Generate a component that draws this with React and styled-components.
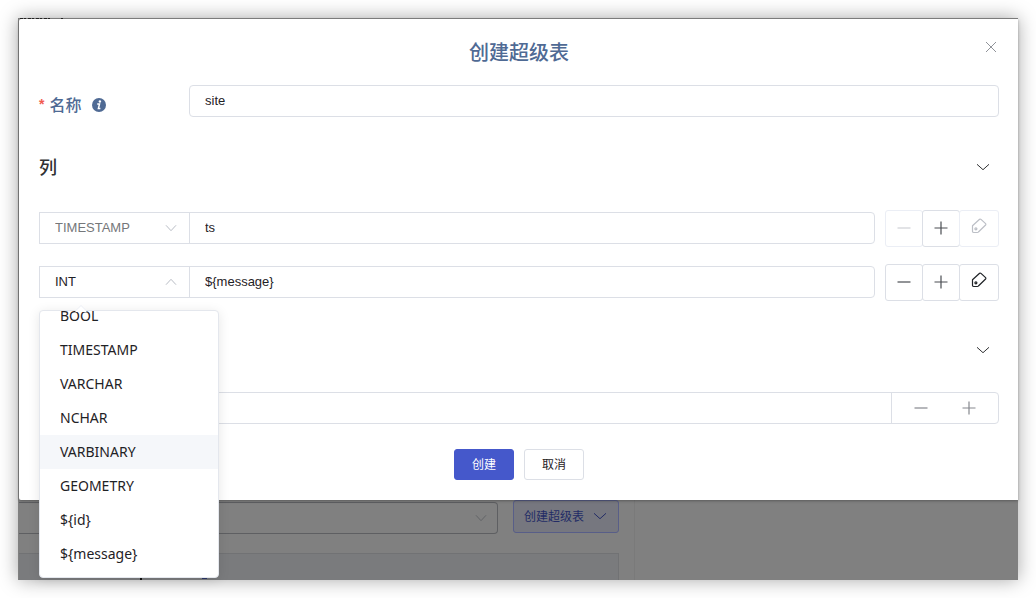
import React, { useState } from 'react';
import styled, { createGlobalStyle } from 'styled-components';

const GlobalStyle = createGlobalStyle`
  *, *::before, *::after {
    box-sizing: border-box;
  }
  body {
    margin: 0;
    background: #fff;
    font-family: 'Liberation Sans', 'Noto Sans CJK SC', sans-serif;
    color: #1f2226;
  }
  button, input, select {
    font-family: inherit;
    margin: 0;
  }
`;

const Stage = styled.div`
  padding: 18px;
`;

const Frame = styled.div`
  position: relative;
  padding: 1px 0 0 1px;
  background: #808080;
  box-shadow: 0 0 18px rgba(0, 0, 0, 0.35);
`;

const Scraps = styled.svg`
  position: absolute;
  left: ${props => props.$left}px;
  ${props => (props.$bottom ? 'bottom: 0;' : 'top: 0;')}
`;

const Dialog = styled.form`
  position: relative;
  padding: 20px 19px 20px 20px;
  background: #fff;
  border-radius: 2px 0 0 2px;
  box-shadow: 0 1px 3px rgba(0, 0, 0, 0.3);
`;

const Title = styled.h1`
  margin: 0 0 18px;
  font-size: 20px;
  line-height: 28px;
  font-weight: 500;
  text-align: center;
  color: #4f6a94;
`;

const Close = styled.button`
  position: absolute;
  top: 20px;
  right: 19px;
  width: 16px;
  height: 16px;
  padding: 0;
  border: 0;
  background: none;
  color: #909399;
  cursor: pointer;
`;

const Field = styled.div`
  display: flex;
  align-items: flex-start;
`;

const Label = styled.label`
  display: flex;
  align-items: center;
  width: 150px;
  height: 38px;
  font-size: 16px;
  font-weight: 500;
  color: #4f6a94;
  svg {
    margin: 2px 0 0 11px;
  }
`;

const Star = styled.span`
  margin-right: 5px;
  font-size: 14px;
  font-weight: 700;
  color: #f15b50;
`;

const TextInput = styled.input`
  flex: 1;
  min-width: 0;
  height: 32px;
  padding: 0 15px 2px;
  border: 1px solid #dcdfe6;
  border-radius: ${props => (props.$joined ? '0 4px 4px 0' : '4px')};
  background: #fff;
  font-size: 13px;
  color: #1f2226;
  outline: none;
`;

const SectionHead = styled.div`
  display: flex;
  align-items: center;
  justify-content: space-between;
  height: 48px;
  margin-top: ${props => props.$gap}px;
  padding-right: 9px;
`;

const SectionTitle = styled.h2`
  margin: 0;
  padding-bottom: 2px;
  font-size: 18px;
  font-weight: 500;
  color: #303133;
`;

const Toggle = styled.button`
  display: flex;
  margin-left: auto;
  padding: 0;
  border: 0;
  background: none;
  color: #303133;
  cursor: pointer;
`;

const Rows = styled.div`
  display: flex;
  flex-direction: column;
  gap: 17px;
  margin-top: 19px;
`;

const Row = styled.div`
  display: flex;
  align-items: flex-start;
  gap: 10px;
`;

const Group = styled.div`
  display: flex;
  flex: 1;
  margin-top: 2px;
`;

const SelectWrap = styled.div`
  position: relative;
  width: 151px;
  margin-right: -1px;
  color: #b9bdc5;
`;

const TypeSelect = styled.select`
  appearance: none;
  display: block;
  width: 100%;
  height: 32px;
  padding: 0 30px 2px 15px;
  border: 1px solid #dcdfe6;
  border-radius: 0;
  background: #fff;
  font-size: 13px;
  color: #1f2226;
  opacity: 1;
  &:disabled {
    color: #75777a;
  }
`;

const Caret = styled.span`
  position: absolute;
  top: 10px;
  right: 13px;
  display: flex;
  pointer-events: none;
`;

const Actions = styled.div`
  display: grid;
  grid-template-columns: 37px 37px 40px;
`;

const IconButton = styled.button`
  display: flex;
  align-items: center;
  justify-content: center;
  height: 37px;
  margin-right: ${props => (props.$last ? 0 : -1)}px;
  padding: 0 0 2px;
  border: 1px solid #dcdfe6;
  border-radius: 3px;
  background: #fff;
  color: #4a4d52;
  cursor: pointer;
  &:disabled {
    border-color: #ebeef5;
    color: #cfd1d6;
  }
`;

const TagButton = styled(IconButton)`
  padding-bottom: 5px;
  color: #1f2226;
  &:disabled {
    color: #bcbfc6;
  }
`;

const TagGroup = styled.div`
  display: flex;
  height: 32px;
  margin-top: 18px;
  border: 1px solid #dcdfe6;
  border-radius: 4px;
`;

const TagInput = styled.input`
  flex: 1;
  min-width: 0;
  padding: 0 15px;
  border: 0;
  border-right: 1px solid #dcdfe6;
  border-radius: 4px 0 0 4px;
  font-size: 13px;
  outline: none;
`;

const Append = styled.div`
  display: flex;
  justify-content: center;
  width: 106px;
`;

const PlainButton = styled.button`
  display: flex;
  align-items: center;
  justify-content: center;
  width: 48px;
  padding: 0;
  border: 0;
  background: none;
  color: #85888e;
  cursor: pointer;
`;

const Footer = styled.div`
  display: flex;
  justify-content: center;
  gap: 10px;
  margin-top: 25px;
`;

const Button = styled.button`
  width: 60px;
  height: 31px;
  padding: 0 0 2px;
  border: 1px solid ${props => (props.$primary ? '#4558cb' : '#dcdfe6')};
  border-radius: 3px;
  background: ${props => (props.$primary ? '#4558cb' : '#fff')};
  color: ${props => (props.$primary ? '#fff' : '#1f2226')};
  font-size: 12px;
  cursor: pointer;
`;

const Menu = styled.div`
  position: absolute;
  z-index: 10;
  top: 44px;
  left: 0;
  width: 180px;
  border: 1px solid #e4e7ed;
  border-radius: 4px;
  background: #fff;
  box-shadow: 0 2px 12px rgba(0, 0, 0, 0.1);
  &::before,
  &::after {
    content: '';
    position: absolute;
    left: 35px;
    top: -6px;
    border: 6px solid transparent;
    border-top: 0;
    border-bottom-color: #ebeef5;
  }
  &::after {
    top: -5px;
    border-bottom-color: #fff;
  }
`;

const Options = styled.ul`
  display: flex;
  flex-direction: column;
  justify-content: flex-end;
  height: 266px;
  margin: 0;
  padding: 0 0 6px;
  overflow: hidden;
  list-style: none;
`;

const Option = styled.li`
  flex: none;
  height: 34px;
  padding: 0 20px;
  background: ${props => (props.$active ? '#f5f7fa' : 'transparent')};
  font-family: 'Noto Sans', sans-serif;
  font-size: 14px;
  line-height: 34px;
  color: #1f2226;
  cursor: pointer;
`;

const Behind = styled.div`
  display: grid;
  grid-template-columns: 616px 1fr;
  height: 80px;
  overflow: hidden;
`;

const BehindLeft = styled.div`
  padding-right: 15px;
  border-right: 1px solid #7a7a7a;
`;

const BehindBar = styled.div`
  display: flex;
  align-items: flex-start;
  gap: 15px;
`;

const BehindSelect = styled.div`
  display: flex;
  flex: 1;
  align-items: center;
  justify-content: flex-end;
  height: 32px;
  margin-top: 2px;
  padding-right: 10px;
  border: 1px solid #5e5f62;
  border-left: 0;
  border-radius: 0 4px 4px 0;
  color: #626467;
`;

const BehindButton = styled.button`
  display: flex;
  align-items: center;
  justify-content: space-between;
  width: 106px;
  height: 33px;
  padding: 0 11px 2px 10px;
  border: 1px solid #585e88;
  border-radius: 3px;
  background: #76777f;
  color: #232c66;
  font-size: 12px;
`;

const BehindPanel = styled.div`
  height: 40px;
  margin-top: 19px;
  border: 1px solid #717274;
  border-left: 0;
  background: #7a7b7d;
`;

const Chevron = ({ up, width = 12 }) => (
  <svg width={width} height="12" viewBox={`0 0 ${width} 12`} fill="none" stroke="currentColor">
    <path
      d={
        up
          ? `M1 8.7 L${width / 2} 3.3 L${width - 1} 8.7`
          : `M1 3.3 L${width / 2} 8.7 L${width - 1} 3.3`
      }
    />
  </svg>
);

const Minus = () => (
  <svg width="14" height="14" viewBox="0 0 14 14" stroke="currentColor" strokeWidth="1.2">
    <path d="M0.5 7 H13.5" />
  </svg>
);

const Plus = () => (
  <svg width="14" height="14" viewBox="0 0 14 14" stroke="currentColor" strokeWidth="1.2">
    <path d="M0.5 7 H13.5 M7 0.5 V13.5" />
  </svg>
);

const TagIcon = () => (
  <svg
    width="16"
    height="16"
    viewBox="0 0 16 16"
    fill="none"
    stroke="currentColor"
    strokeWidth="1.2"
  >
    <path
      d="M1.5 7.8 L8.6 1.3 Q9.3 .8 10 1.4 L14.6 5.6 Q15.2 6.3 14.6 7 L7.4 14 Q7 14.5 6.3 14.5 H2.6 Q1.5 14.5 1.5 13.3 Z"
      strokeLinejoin="round"
    />
    <circle cx="4.9" cy="10.8" r="1" />
  </svg>
);

const InfoIcon = () => (
  <svg width="14" height="14" viewBox="0 0 14 14">
    <circle cx="7" cy="7" r="7" fill="#4f6a94" />
    <circle cx="7.9" cy="3.5" r="1.2" fill="#fff" />
    <path d="M5.2 6.1 H7.5 L6.4 10.4 H8.4" fill="none" stroke="#fff" strokeWidth="1.5" />
  </svg>
);

const types = [
  'BOOL',
  'TIMESTAMP',
  'VARCHAR',
  'NCHAR',
  'VARBINARY',
  'GEOMETRY',
  '${id}',
  '${message}',
];

const columns = [
  { type: 'TIMESTAMP', name: 'ts', locked: true },
  { type: 'INT', name: '${message}', open: true },
];

const TypeMenu = () => {
  const [active, setActive] = useState('VARBINARY');
  return (
    <Menu>
      <Options role="listbox" aria-label="类型">
        {types.map(type => (
          <Option
            key={type}
            role="option"
            aria-selected={type === active}
            $active={type === active}
            onMouseEnter={() => setActive(type)}
          >
            {type}
          </Option>
        ))}
      </Options>
    </Menu>
  );
};

const ColumnRow = ({ column }) => {
  const { type, name, locked, open } = column;
  return (
    <Row>
      <Group>
        <SelectWrap>
          <TypeSelect aria-label="类型" defaultValue={type} disabled={locked}>
            <option>{type}</option>
          </TypeSelect>
          <Caret>
            <Chevron up={open} />
          </Caret>
          {open && <TypeMenu />}
        </SelectWrap>
        <TextInput $joined aria-label="列名" defaultValue={name} />
      </Group>
      <Actions>
        <IconButton type="button" aria-label="删除" disabled={locked}>
          <Minus />
        </IconButton>
        <IconButton type="button" aria-label="添加">
          <Plus />
        </IconButton>
        <TagButton $last type="button" aria-label="标签" disabled={locked}>
          <TagIcon />
        </TagButton>
      </Actions>
    </Row>
  );
};

const App = () => (
  <Stage>
    <GlobalStyle />
    <Frame>
      <Dialog onSubmit={e => e.preventDefault()}>
        <Title>创建超级表</Title>
        <Close type="button" aria-label="关闭">
          <svg width="16" height="16" viewBox="0 0 16 16" stroke="currentColor">
            <path d="M3 3 L13 13 M13 3 L3 13" />
          </svg>
        </Close>
        <Field>
          <Label htmlFor="name">
            <Star>*</Star>
            名称
            <InfoIcon />
          </Label>
          <TextInput id="name" defaultValue="site" />
        </Field>
        <SectionHead $gap={20}>
          <SectionTitle>列</SectionTitle>
          <Toggle type="button" aria-label="展开列">
            <Chevron width={14} />
          </Toggle>
        </SectionHead>
        <Rows>
          {columns.map(column => (
            <ColumnRow key={column.name} column={column} />
          ))}
        </Rows>
        <SectionHead $gap={25}>
          <Toggle type="button" aria-label="展开标签">
            <Chevron width={14} />
          </Toggle>
        </SectionHead>
        <TagGroup>
          <TagInput aria-label="标签名" />
          <Append>
            <PlainButton type="button" aria-label="删除">
              <Minus />
            </PlainButton>
            <PlainButton type="button" aria-label="添加">
              <Plus />
            </PlainButton>
          </Append>
        </TagGroup>
        <Footer>
          <Button $primary type="submit">
            创建
          </Button>
          <Button type="button">取消</Button>
        </Footer>
      </Dialog>
      <Behind>
        <BehindLeft>
          <BehindBar>
            <BehindSelect>
              <Chevron />
            </BehindSelect>
            <BehindButton type="button">
              创建超级表
              <Chevron width={14} />
            </BehindButton>
          </BehindBar>
          <BehindPanel />
        </BehindLeft>
      </Behind>
      <Scraps $left={0} width="60" height="1" viewBox="0 0 60 1">
        <path d="M2 .5 H32 M43 .5 H45" stroke="#222" strokeDasharray="3 1 2 2" />
      </Scraps>
      <Scraps $bottom $left={120} width="72" height="2" viewBox="0 0 72 2">
        <path d="M2 1 H4" stroke="#111" strokeWidth="2" />
        <path d="M64 .5 H69" stroke="#2b3566" />
      </Scraps>
    </Frame>
  </Stage>
);

export default App;
